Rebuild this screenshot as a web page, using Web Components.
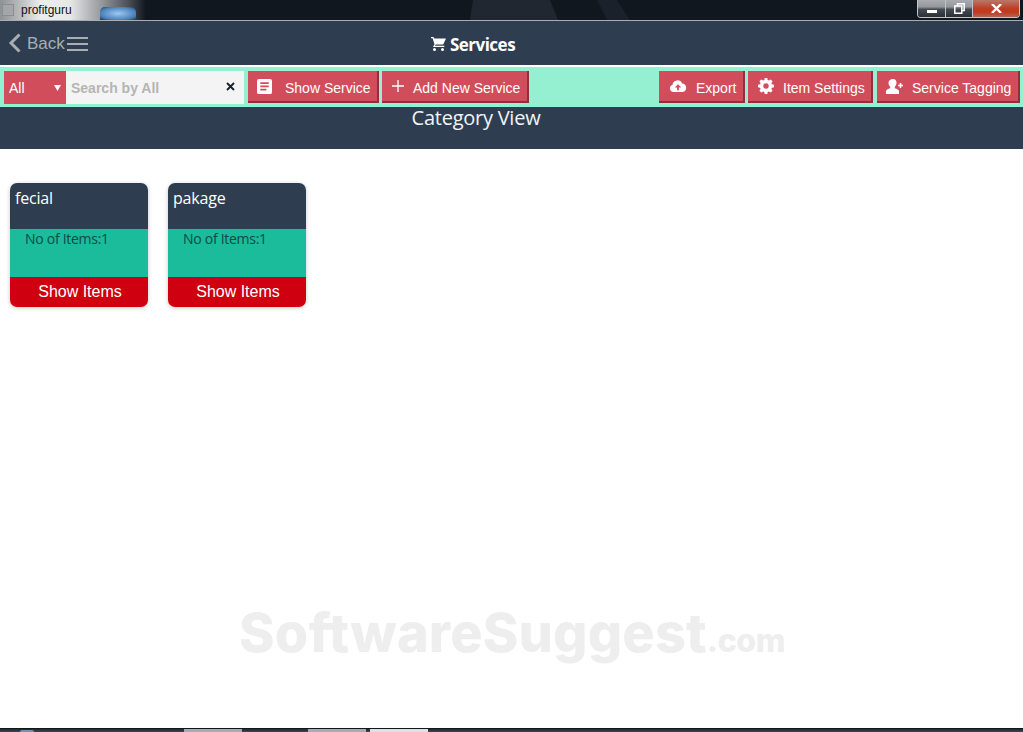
<!DOCTYPE html>
<html>
<head>
<meta charset="utf-8">
<title>profitguru</title>
<style>
  html, body { margin: 0; height: 100%; overflow: hidden; background: #fff; }
  body { display: flex; flex-direction: column; height: 732px; font-family: "Liberation Sans", Arial, sans-serif; }
</style>
</head>
<body>
<win-titlebar title-text="profitguru"></win-titlebar>
<app-nav heading="Services"></app-nav>
<app-toolbar></app-toolbar>
<view-banner heading="Category View"></view-banner>
<card-area>
  <category-card name="fecial" count="1"></category-card>
  <category-card name="pakage" count="1"></category-card>
</card-area>
<win-taskbar></win-taskbar>

<script>
const ICONS = {
  doc: `<svg width="15" height="15" viewBox="0 0 16 16"><path fill="#fff" fill-rule="evenodd" d="M2 0h12a2 2 0 0 1 2 2v12a2 2 0 0 1-2 2H2a2 2 0 0 1-2-2V2a2 2 0 0 1 2-2zM3.500 3.500v1.700h9V3.500zM3.500 7v1.700h9V7zM3.500 10.500v1.700h6.500v-1.700z"/></svg>`,
  plus: `<svg width="12" height="12" viewBox="0 0 13 13"><path stroke="#fff" stroke-width="1.400" d="M6.500 0v13M0 6.500h13"/></svg>`,
  cloud: `<svg width="18" height="12" viewBox="0 0 18 13"><path fill="#fff" fill-rule="evenodd" d="M4 13a4 4 0 0 1-1-7.800A5.500 5.500 0 0 1 13.500 3.700 4.700 4.700 0 0 1 14 13zM9 4.500 5.500 8H8v3h2V8h2.500z"/></svg>`,
  gear: `<svg width="16" height="16" viewBox="0 0 16 16"><path fill="#fff" fill-rule="evenodd" d="M6.700 0h2.600l.4 2.100 1.200.5L12.700 1.400l1.900 1.900-1.200 1.800.5 1.200 2.100.4v2.600l-2.100.4-.5 1.200 1.200 1.800-1.900 1.900-1.800-1.200-1.200.5-.4 2.100H6.700l-.4-2.100-1.200-.5-1.800 1.200-1.900-1.900 1.200-1.800-.5-1.200L0 9.300V6.700l2.100-.4.500-1.200L1.400 3.300l1.900-1.900 1.800 1.200 1.200-.5zM8 5.300a2.700 2.700 0 1 0 0 5.400 2.700 2.700 0 0 0 0-5.400z"/></svg>`,
  user: `<svg width="18" height="15" viewBox="0 0 18 15"><path fill="#fff" d="M7 0c2.200 0 3.500 1.600 3.500 3.800 0 1.700-.7 3.100-1.700 3.900v1.500c2.300.6 4.200 1.500 4.200 3V15H0v-2.800c0-1.500 1.900-2.400 4.200-3V7.700c-1-.8-1.700-2.200-1.700-3.900C2.500 1.600 4.800 0 7 0z"/><path stroke="#fff" stroke-width="1.600" d="M14.500 4v5M12 6.500h5"/></svg>`,
  cart: `<svg width="15" height="14" viewBox="0 0 15 14"><path fill="#fff" d="M0 0h2.500l.7 1.500H15l-2.800 6H4.700l-.8 1.300h9.400V10H2l1.500-2.800L1.600 1.300H0z"/><circle fill="#fff" cx="3.500" cy="12.500" r="1.500"/><circle fill="#fff" cx="11.500" cy="12.500" r="1.500"/></svg>`
};

class WinTitlebar extends HTMLElement {
  constructor() {
    super();
    this.attachShadow({ mode: "open" });
  }
  connectedCallback() {
    this.shadowRoot.innerHTML = `
    <style>
      :host {
        display: flex; flex: none; height: 21px; box-sizing: border-box; position: relative; overflow: hidden;
        background: #10171f; border-bottom: 1px solid #a9adb0;
        font: 12px "Liberation Sans", Arial, sans-serif; color: #14110f;
      }
      .glass {
        position: absolute; left: 0; top: 0; width: 146px; height: 20px;
        background: linear-gradient(90deg, #8f9295 0, #b4b6b9 12%, #eceded 28%, #e6e7e8 48%, #9b9ea2 68%, #4a4f55 88%, #10171f 100%);
      }
      .glow {
        position: absolute; left: 100px; top: 7px; width: 36px; height: 13px; border-radius: 5px 5px 0 0;
        background: radial-gradient(ellipse at center, #9cc9f4 0, #4a7fb8 70%, #1d3148 100%);
      }
      .streak { position: absolute; top: 0; height: 20px; background: #202730; }
      .s1 { left: 470px; width: 88px; clip-path: polygon(3px 0, 80px 0, 88px 100%, 0 100%); }
      .s2 { left: 597px; width: 33px; background: #1a212a; clip-path: polygon(0 0, 20px 0, 33px 100%, 10px 100%); }
      .app { position: relative; display: flex; align-items: center; gap: 7px; padding-left: 2px; }
      .ico { width: 10px; height: 10px; border: 1px solid #8a8e91; background: #a4a7aa; }
      .spacer { flex: 1; }
      .controls {
        position: relative; display: flex; height: 18px; margin-right: 3px; box-sizing: border-box;
        border: 1px solid #c4c7ca; border-top: 0; border-radius: 0 0 4px 4px; overflow: hidden;
      }
      .controls div { display: flex; align-items: center; justify-content: center; border-right: 1px solid #bfc3c6; }
      .min, .max { width: 27px; background: linear-gradient(#a8abaf 0, #95999d 40%, #454b52 55%, #2a3036 100%); }
      .max { width: 26px !important; }
      .close { width: 46px; border: 0 !important; background: linear-gradient(#b9786b 0, #bd3f24 50%, #c7361b 70%, #a9675a 100%); }
      .min i { display: block; width: 10px; height: 3px; margin-top: 5px; background: #fff; }
      .max svg, .close svg { display: block; }
    </style>
    <div class="glass"></div><div class="glow"></div><div class="streak s1"></div><div class="streak s2"></div>
    <div class="app"><span class="ico"></span><span>${this.getAttribute("title-text")}</span></div>
    <div class="spacer"></div>
    <div class="controls">
      <div class="min"><i></i></div>
      <div class="max"><svg width="11" height="11" viewBox="0 0 11 11"><path fill="none" stroke="#fff" stroke-width="1.500" d="M3.500 2.500V.8h6.700v6.700H8M.8 3h7v7.200H.8z"/></svg></div>
      <div class="close"><svg width="11" height="9" viewBox="0 0 11 9"><path stroke="#fff" stroke-width="2.400" d="M1 0l9 9M10 0 1 9"/></svg></div>
    </div>`;
  }
}
customElements.define("win-titlebar", WinTitlebar);

class AppNav extends HTMLElement {
  constructor() {
    super();
    this.attachShadow({ mode: "open" });
  }
  connectedCallback() {
    this.shadowRoot.innerHTML = `
    <style>
      :host {
        display: grid; grid-template-columns: 1fr auto 1fr; align-items: center; flex: none;
        height: 44px; padding: 0 0 0 8px; box-sizing: border-box; background: #2e3e50;
      }
      .left { display: flex; align-items: center; color: #a9aeb3; font: 17px "Liberation Sans", Arial, sans-serif; }
      .left span { margin-top: 1px; margin-right: -1px; }
      .back { margin-right: 6px; display: block; }
      .burger { display: flex; flex-direction: column; gap: 4px; width: 21px; margin: 1px 0 0 3px; }
      .burger i { display: block; height: 2px; background: #a9aeb3; }
      .title {
        display: flex; align-items: center; gap: 4px; margin: 2px 85px 0 0;
        color: #fff; font: 700 17px "Open Sans", "Noto Sans", sans-serif; letter-spacing: -.5px;
      }
    </style>
    <div class="left">
      <svg class="back" width="13" height="20" viewBox="0 0 13 20"><path fill="none" stroke="#a9aeb3" stroke-width="3" d="M11.500 1.500 3 10l8.500 8.500"/></svg>
      <span>Back</span>
      <div class="burger"><i></i><i></i><i></i></div>
    </div>
    <div class="title">${ICONS.cart}<span>${this.getAttribute("heading")}</span></div>
    <div></div>`;
  }
}
customElements.define("app-nav", AppNav);

class ActionButton extends HTMLElement {
  constructor() {
    super();
    this.attachShadow({ mode: "open" });
  }
  connectedCallback() {
    this.shadowRoot.innerHTML = `
    <style>
      :host {
        display: inline-flex; align-items: center; box-sizing: border-box; height: 32px;
        padding: 0 8px 0 var(--pad, 9px); gap: var(--gap, 12px); white-space: nowrap;
        background: #d24d5b; color: #fff; font: 14px "Liberation Sans", Arial, sans-serif;
        border-right: 2px solid #90303b; border-bottom: 2px solid #90303b;
      }
      .icon { display: flex; }
      .label { margin-top: 4px; }
    </style>
    <span class="icon">${ICONS[this.getAttribute("icon")]}</span><span class="label"><slot></slot></span>`;
  }
}
customElements.define("action-button", ActionButton);

class SearchBox extends HTMLElement {
  constructor() {
    super();
    this.attachShadow({ mode: "open" });
  }
  connectedCallback() {
    this.shadowRoot.innerHTML = `
    <style>
      :host { display: flex; height: 33px; width: 240px; font: 14px "Liberation Sans", Arial, sans-serif; }
      .select {
        display: flex; align-items: center; justify-content: space-between; box-sizing: border-box;
        width: 62px; padding: 0 5px 0 5px; background: #d24d5b; color: #fff; font-weight: 400;
      }
      .select svg { display: block; }
      .field {
        flex: 1; display: flex; align-items: center; justify-content: space-between;
        padding: 0 9px 0 5px; background: #f4f4f4; color: #b4b4b4; font-weight: 700;
      }
      .x { display: block; margin-top: -2px; }
    </style>
    <div class="select"><span>All</span><svg width="7" height="6" viewBox="0 0 7 6"><path fill="#fff" d="M0 0h7L3.500 6z"/></svg></div>
    <div class="field"><span>Search by All</span>
      <svg class="x" width="9" height="9" viewBox="0 0 9 9"><path stroke="#16202b" stroke-width="1.800" d="M1 1l7 7M8 1 1 8"/></svg></div>`;
  }
}
customElements.define("search-box", SearchBox);

class AppToolbar extends HTMLElement {
  constructor() {
    super();
    this.attachShadow({ mode: "open" });
  }
  connectedCallback() {
    this.shadowRoot.innerHTML = `
    <style>
      :host {
        display: flex; align-items: flex-start; flex: none; box-sizing: border-box; height: 42px;
        padding: 4px 3px 0 4px; gap: 3px; background: #94f0d0; border-top: 2px solid #fff;
      }
      .spacer { flex: 1; }
    </style>
    <search-box></search-box>
    <action-button icon="doc" style="--pad:9px;--gap:13px;width:131px;margin-left:1px">Show Service</action-button>
    <action-button icon="plus" style="--pad:10px;--gap:9px;width:147px">Add New Service</action-button>
    <div class="spacer"></div>
    <action-button icon="cloud" style="--pad:10px;--gap:9px;width:86px">Export</action-button>
    <action-button icon="gear" style="--pad:10px;--gap:9px;width:125px">Item Settings</action-button>
    <action-button icon="user" style="--pad:9px;--gap:8px;width:143px;margin-left:1px">Service Tagging</action-button>`;
  }
}
customElements.define("app-toolbar", AppToolbar);

class ViewBanner extends HTMLElement {
  constructor() {
    super();
    this.attachShadow({ mode: "open" });
  }
  connectedCallback() {
    this.shadowRoot.innerHTML = `
    <style>
      :host {
        display: block; flex: none; box-sizing: border-box; height: 42px; padding: 0 71px 0 0; text-align: center;
        background: #2e3e50; color: #f2f4f5; font: 20px/21px "Open Sans", "Noto Sans", sans-serif; letter-spacing: -.25px;
      }
    </style>
    ${this.getAttribute("heading")}`;
  }
}
customElements.define("view-banner", ViewBanner);

class CategoryCard extends HTMLElement {
  constructor() {
    super();
    this.attachShadow({ mode: "open" });
  }
  connectedCallback() {
    this.shadowRoot.innerHTML = `
    <style>
      :host {
        display: grid; grid-template-rows: 46px 48px 30px; width: 138px; height: 124px; overflow: hidden;
        border-radius: 7px; box-shadow: 0 1px 4px rgba(0,0,0,.22);
        font-family: "Open Sans", "Noto Sans", sans-serif;
      }
      .head { background: #2e3e50; color: #fff; font-size: 16px; line-height: 20px; padding: 5px 0 0 5px; letter-spacing: -.2px; }
      .body { background: #1abc9c; color: #0e4a45; font-size: 14px; line-height: 18px; padding: 1px 0 0 15px; letter-spacing: -.28px; }
      .foot {
        background: #cf0010; color: #fff; text-align: center; padding-left: 2px;
        font: 16px/29px "Liberation Sans", Arial, sans-serif;
      }
    </style>
    <div class="head">${this.getAttribute("name")}</div>
    <div class="body">No of Items:${this.getAttribute("count")}</div>
    <div class="foot">Show Items</div>`;
  }
}
customElements.define("category-card", CategoryCard);

class CardArea extends HTMLElement {
  constructor() {
    super();
    this.attachShadow({ mode: "open" });
  }
  connectedCallback() {
    this.shadowRoot.innerHTML = `
    <style>
      :host {
        display: flex; align-items: flex-start; flex: 1; gap: 20px; position: relative;
        padding: 34px 0 0 10px; background: #fff;
      }
      .mark {
        position: absolute; left: 239px; top: 449px; white-space: nowrap; pointer-events: none;
        color: #eeeeee; font: 800 54px/70px Inter, "Open Sans", sans-serif; letter-spacing: .15px;
      }
      .mark small { font-size: 32px; font-weight: 800; letter-spacing: -.4px; }
    </style>
    <slot></slot>
    <div class="mark">SoftwareSuggest<small>.com</small></div>`;
  }
}
customElements.define("card-area", CardArea);

class WinTaskbar extends HTMLElement {
  constructor() {
    super();
    this.attachShadow({ mode: "open" });
  }
  connectedCallback() {
    this.shadowRoot.innerHTML = `
    <style>
      :host {
        display: flex; flex: none; height: 4px; background: linear-gradient(#20262d, #3c4855);
        border-top: 1px solid #12171c; box-sizing: border-box; position: relative;
      }
      i { display: block; height: 3px; width: 58px; background: #a9acb0; }
      .orb { position: absolute; left: 20px; width: 14px; height: 2px; top: 1px; background: #6f94b8; border-radius: 6px 6px 0 0; }
      .a { margin-left: 184px; }
      .b { margin-left: 66px; }
      .c { margin-left: 4px; background: #dfe0e2; }
    </style>
    <i class="orb"></i><i class="a"></i><i class="b"></i><i class="c"></i>`;
  }
}
customElements.define("win-taskbar", WinTaskbar);
</script>
</body>
</html>
